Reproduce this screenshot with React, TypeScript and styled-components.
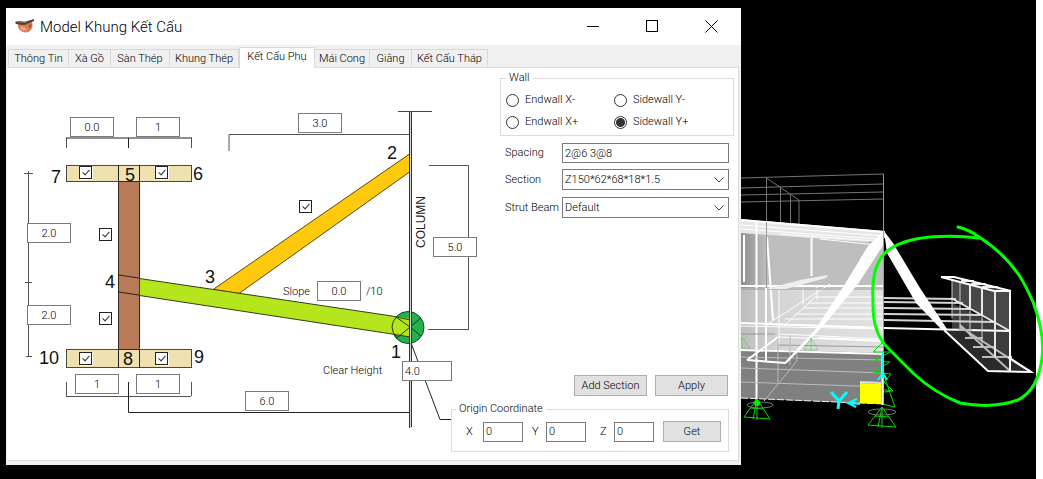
import React from "react";
import styled, { createGlobalStyle, css } from "styled-components";

const GlobalStyle = createGlobalStyle`
  *, *::before, *::after { box-sizing: border-box; }
  body { margin: 0; background: #000; }
  body, button, input, select, fieldset {
    font-family: Roboto, "Noto Sans", sans-serif;
    font-size: 11px;
    line-height: 14px;
    font-weight: 300;
    color: #000;
  }
`;

const Desktop = styled.main`
  display: flex;
  align-items: flex-start;
  min-height: 100vh;
  background: #000;
`;

const Window = styled.section`
  flex: 735 1 0;
  min-width: 735px;
  margin: 8px 0 0 6px;
  background: #f0f0f0;
`;

const TitleBar = styled.header`
  display: flex;
  align-items: center;
  height: 37px;
  padding-left: 9px;
  background: #fff;
`;

const Title = styled.h1`
  flex: 1;
  margin: 0 0 0 5px;
  font-size: 15px;
  line-height: 20px;
  font-weight: 300;
`;

const CaptionButton = styled.button`
  display: grid;
  place-items: center;
  width: 59px;
  height: 36px;
  padding: 0;
  border: 0;
  background: none;
`;

const TabStrip = styled.div`
  display: flex;
  align-items: flex-end;
  height: 22px;
  padding: 0 2px;
`;

const Tab = styled.button<{ $w: number; $selected?: boolean }>`
  width: ${(p) => p.$w}px;
  height: 18px;
  padding: 0;
  white-space: nowrap;
  border: 1px solid #d9d9d9;
  border-width: 1px 1px 0 0;
  background: #f0f0f0;
  &:first-child { border-left-width: 1px; }
  ${(p) =>
    p.$selected &&
    css`
      height: 21px;
      margin-bottom: -1px;
      padding-bottom: 3px;
      border-left-width: 1px;
      background: #fff;
      z-index: 1;
    `}
`;

const TabPage = styled.div`
  display: grid;
  grid-template-columns: 443px 49px 1fr;
  grid-template-rows: auto 50px;
  margin: 0 2px 0 1px;
  padding: 0 0 8px 1px;
  border: 1px solid #dcdcdc;
  border-left: 0;
  background: #fff;
`;

const WindowEdge = styled.div`
  height: 4px;
`;

const Canvas = styled.div`
  position: relative;
  grid-column: 1 / 3;
  grid-row: 1 / 3;
  width: 492px;
  height: 384px;
`;

const Drawing = styled.svg`
  display: block;
  text {
    font-family: "Liberation Sans", Arial, sans-serif;
    font-weight: 400;
  }
`;

const TextBox = styled.input`
  min-width: 0;
  height: 20px;
  padding: 0 2px;
  border: 1px solid #7a7a7a;
  border-radius: 0;
  background: #fff;
`;

const DimensionBox = styled(TextBox)<{ $x: number; $y: number; $wide?: boolean }>`
  position: absolute;
  left: ${(p) => p.$x}px;
  top: ${(p) => p.$y}px;
  width: ${(p) => (p.$wide ? 50 : 44)}px;
  text-align: ${(p) => (p.$wide ? "left" : "center")};
`;

const CanvasLabel = styled.label<{ $x: number; $y: number }>`
  position: absolute;
  left: ${(p) => p.$x}px;
  top: ${(p) => p.$y}px;
  white-space: nowrap;
`;

const MemberCheck = styled.input<{ $x: number; $y: number }>`
  appearance: none;
  position: absolute;
  left: ${(p) => p.$x}px;
  top: ${(p) => p.$y}px;
  width: 13px;
  height: 13px;
  margin: 0;
  border: 1px solid #222;
  background: #fff;
  box-shadow: 1px 1px 0 #fff;
  &:checked::after {
    content: "";
    position: absolute;
    left: 4px;
    top: 1px;
    width: 4px;
    height: 7px;
    border: solid #333;
    border-width: 0 1px 1px 0;
    transform: rotate(42deg);
  }
`;

const SidePanel = styled.div`
  grid-column: 3;
  grid-row: 1;
  display: flex;
  flex-direction: column;
  justify-content: space-between;
`;

const Settings = styled.div`
  padding: 3px 4px 0 0;
`;

const Group = styled.fieldset`
  min-width: 0;
  margin: 0;
  border: 1px solid #dcdcdc;
  legend {
    padding: 0 3px;
  }
`;

const WallGroup = styled(Group)`
  display: grid;
  grid-template-columns: 108px 1fr;
  align-content: start;
  row-gap: 8px;
  height: 65px;
  padding: 8px 5px 0;
`;

const RadioLabel = styled.label`
  display: flex;
  align-items: center;
  gap: 6px;
  height: 14px;
  white-space: nowrap;
`;

const Radio = styled.input`
  appearance: none;
  width: 13px;
  height: 13px;
  margin: 0;
  border: 1px solid #333;
  border-radius: 50%;
  background: #fff;
  &:checked {
    background: radial-gradient(circle, #333 4px, #fff 5px);
  }
`;

const FieldGrid = styled.div`
  display: grid;
  grid-template-columns: 57px 1fr;
  align-items: center;
  row-gap: 6px;
  padding: 7px 5px 0;
`;

const FieldLabel = styled.label`
  white-space: nowrap;
`;

const SelectBox = styled.div`
  display: grid;
  align-items: center;
  margin-bottom: 1px;
  > * { grid-area: 1 / 1; }
  svg { justify-self: end; margin-right: 5px; pointer-events: none; }
`;

const Select = styled.select`
  appearance: none;
  width: 100%;
  height: 21px;
  padding: 0 2px;
  border: 1px solid #7a7a7a;
  border-radius: 0;
  background: #fff;
`;

const Actions = styled.div`
  display: flex;
  justify-content: flex-end;
  gap: 8px;
  padding: 0 10px 6px 0;
`;

const PushButton = styled.button<{ $w: number }>`
  width: ${(p) => p.$w}px;
  height: 21px;
  padding: 0;
  border: 1px solid #adadad;
  background: #e1e1e1;
  white-space: nowrap;
`;

const OriginGroup = styled(Group)`
  grid-column: 2 / 4;
  grid-row: 2;
  position: relative;
  display: flex;
  align-items: center;
  height: 50px;
  margin-right: 9px;
  padding: 0 7px 4px 5px;
  legend { margin-left: -1px; }
`;

const AxisLabel = styled.label`
  display: flex;
  align-items: center;
  justify-content: space-between;
  width: 54px;
  margin-left: 9px;
  & + & { margin-left: 9px; }
  & + & + & { margin-left: 14px; }
  input { width: 40px; }
  &:first-of-type { width: 57px; }
`;

const Spacer = styled.span`
  flex: 1;
`;

const Viewport = styled.svg`
  display: block;
  flex: 302 1 0;
  min-width: 0;
  height: auto;
`;

const tabs = [
  { name: "Thông Tin", w: 61 },
  { name: "Xà Gồ", w: 42 },
  { name: "Sàn Thép", w: 59 },
  { name: "Khung Thép", w: 69 },
  { name: "Kết Cấu Phụ", w: 76 },
  { name: "Mái Cong", w: 55 },
  { name: "Giằng", w: 42 },
  { name: "Kết Cấu Tháp", w: 76 },
];

const dimensions = [
  { name: "Top left flange", x: 62, y: 49, v: "0.0" },
  { name: "Top right flange", x: 128, y: 49, v: "1" },
  { name: "Strut offset", x: 290, y: 45, v: "3.0" },
  { name: "Upper height", x: 19, y: 155, v: "2.0" },
  { name: "Lower height", x: 19, y: 237, v: "2.0" },
  { name: "Strut height", x: 425, y: 169, v: "5.0" },
  { name: "Bottom left flange", x: 67, y: 306, v: "1" },
  { name: "Bottom right flange", x: 128, y: 306, v: "1" },
  { name: "Beam length", x: 237, y: 323, v: "6.0" },
];

const members = [
  { name: "Member 5-7", x: 71, y: 98 },
  { name: "Member 5-6", x: 147, y: 98 },
  { name: "Member 4-5", x: 91, y: 160 },
  { name: "Member 2-3", x: 291, y: 132 },
  { name: "Member 4-8", x: 91, y: 244 },
  { name: "Member 8-10", x: 71, y: 284 },
  { name: "Member 8-9", x: 147, y: 284 },
];

const nodes = [
  { n: "7", x: 51, y: 183 },
  { n: "5", x: 125, y: 181 },
  { n: "6", x: 193, y: 180 },
  { n: "2", x: 387, y: 159 },
  { n: "4", x: 105, y: 288 },
  { n: "3", x: 205, y: 283 },
  { n: "10", x: 39, y: 364 },
  { n: "8", x: 123, y: 365 },
  { n: "9", x: 194, y: 363 },
  { n: "1", x: 391, y: 358 },
];

function AppIcon() {
  return (
    <svg width="20" height="15" viewBox="0 0 20 15" aria-hidden="true">
      <path d="M3 4 L17 3 Q19 8 15 12 Q11 15 6 12 Q2 9 3 4Z" fill="#d98258" />
      <path d="M5 8 Q9 7 12 10 Q10 13 7 11Z" fill="#f1a97c" />
      <path d="M13 6 L17 5 L15 10Z" fill="#b45634" />
      <path d="M0 3 Q5 1 9 3 L19 0 L19 2 L10 6 Q5 6 1 5Z" fill="#5b3a32" />
      <path d="M3 3 L12 3" stroke="#a58b7e" />
    </svg>
  );
}

function Chevron() {
  return (
    <svg width="10" height="6" viewBox="0 0 10 6" fill="none" stroke="#444" aria-hidden="true">
      <path d="M0.5 0.5 L5 5 L9.5 0.5" />
    </svg>
  );
}

function FrameDrawing() {
  return (
    <Drawing width="492" height="384" viewBox="8 68 492 384">
      <g fill="#efe2b0" stroke="#4c4a40">
        <rect x="66.5" y="165.5" width="125" height="16" />
        <rect x="66.5" y="349.5" width="125" height="18" />
      </g>
      <rect x="118.5" y="181.5" width="21" height="168" fill="#b97a57" stroke="#33261f" />
      <path d="M118.5 165V182M139.5 165V182M118.5 349V368M139.5 349V368" stroke="#222" />
      <path d="M118.5 275 L139 278M118.5 292 L139 295" stroke="#222" />
      <path d="M213 289.500 L409.500 154 V172 L239 293.500Z" fill="#ffc90e" stroke="#5c4a12" />
      <circle cx="408" cy="327.500" r="16" fill="#22b14c" stroke="#164a25" />
      <path d="M139.500 278.500 L410 318.700 V337 L139.500 295.500Z" fill="#b5e61d" />
      <path d="M410 320 L392 316 L139.500 278.500 V295.500 L392 334 L410 337" fill="none" stroke="#363d16" />
      <path d="M397 316 Q387 327 397 338M410 327 L396 317M410 327 L397 338M410 327 L421 318M410 327 L421 336" fill="none" stroke="#183b16" />
      <path d="M410.500 111V428" stroke="#d8d8d8" />
      <path d="M409.500 111V428M411.500 111V427" stroke="#333" />
      <path d="M398 111.500H432" stroke="#444" />
      <g fill="none" stroke="#555">
        <path d="M66.500 148V138M191.500 148V138" />
        <path d="M229 151V134.500H409M429 165.500H468.500V329M428 329.500H469" />
        <path d="M28.500 171V357M24 173.500H33M25 282.500H32M26 356.500H32" />
        <path d="M66.500 382V396M191.500 382V396" />
        <path d="M66 396.500H191" strokeWidth="1" />
      </g>
      <path d="M66 138H192M128.500 138V148M128.500 382V412.500H409M411 343 L440 419.500H452" fill="none" stroke="#222" />
      <g fontSize="18" fill="#111">
        {nodes.map((p) => (
          <text key={p.n} x={p.x} y={p.y}>{p.n}</text>
        ))}
      </g>
      <text transform="translate(425 248) rotate(-90)" fontSize="12" fill="#222">COLUMN</text>
    </Drawing>
  );
}

function Support({ x, y, w = 13 }: { x: number; y: number; w?: number }) {
  return (
    <g transform={`translate(${x} ${y})`} fill="none" stroke="#0d0">
      <path d={`M0 0 L${-w} 18 L${w} 20Z M0 0V21 M0 0 L-4 20 M${-w / 2} 9 L${w / 2} 10`} />
    </g>
  );
}

function ModelView() {
  return (
    <Viewport width="302" height="479" viewBox="741 0 302 479" preserveAspectRatio="xMinYMin meet">
      <defs>
        <linearGradient id="wallShade">
          <stop offset="0" stopColor="#8e8e8e" />
          <stop offset="0.18" stopColor="#bebebe" />
          <stop offset="1" stopColor="#bebebe" />
        </linearGradient>
        <linearGradient id="floorShade">
          <stop offset="0" stopColor="#bdbdbd" />
          <stop offset="0.3" stopColor="#d6d6d6" />
          <stop offset="1" stopColor="#e2e2e2" />
        </linearGradient>
      </defs>
      <rect x="741" y="0" width="295" height="479" fill="#000" />
      <rect x="1036" y="0" width="7" height="479" fill="#fff" />

      <g fill="none" stroke="#737373">
        <path d="M741 178 L883.500 174V232M741 188 L883 184M741 195 L883 192M741 202 L883 199" />
        <path d="M766.500 178V290M766.500 178 L799 200V235M780.500 187V228M790.500 194V232" />
      </g>

      <path d="M741 220 L884 232V404L741 398Z" fill="url(#wallShade)" />
      <path d="M741 288H884V353L741 350Z" fill="url(#floorShade)" />
      <path d="M741 349 L884 353V404L741 398Z" fill="#808080" />
      <path d="M741 219 L885 231V238L866 242L741 233Z" fill="#e6e6e6" />
      <g fill="none" stroke="#fff">
        <path d="M741 220 L884 232" strokeWidth="2" />
        <path d="M741 225 L884 236M741 229 L880 239M820 239 L876 245M780 234 L876 241" />
        <path d="M811.500 238V276M756.500 222V400" strokeWidth="2" />
        <path d="M744 235V282M767 237 L773 320" strokeWidth="2" />
        <path d="M815 297H884M808 303H884M803 308H884M795 314H884M785 319H884M741 326L884 329M780 334L884 339" />
        <path d="M741 286H884M741 323 L884 328M818 338L884 341M741 350 L884 354" strokeWidth="2" />
        <path d="M766 325 L830 284M778 337 L830 339M784 326 L815 297M779 288V345M803 288V304M817 286V300" />
      </g>
      <g fill="none" stroke="#999">
        <path d="M741 289H884M766.500 222V290M778 345L884 347M775 334H741" />
        <path d="M741 357L884 360M741 368L884 373M741 382L884 387M764 401L797 361V349M778 337V382M790 336V365" stroke="#bbb" />
      </g>
      <path d="M741 398 L884 404" stroke="#eee" strokeDasharray="7 2" />
      <path d="M766 289 L800 280 L828 275 L826 278 L786 289Z" fill="#eee" />
      <path d="M766 288V361M747 360 L786 363M747 360L778 337" fill="none" stroke="#fff" strokeWidth="2" />
      <path d="M884 231 L868 246 L845 284 L815 330 L784 363 H787 L824 325 L858 284 L884 244Z" fill="#fff" />
      <path d="M883.500 174V392" stroke="#999" />

      <path d="M952 280 L1010 291V331 L952 299Z" fill="#484848" />
      <path d="M952 303 L1010 331 V371 L952 330Z" fill="#555" fillOpacity="0.7" />
      <path d="M944 330 L965 329 L1031 372 L988 371Z" fill="#2a2a2a" />
      <g fill="none" stroke="#d4d4d4" strokeWidth="2">
        <path d="M884 298L956 299M884 302L963 303M884 308L970 309M884 314L982 315M884 320L995 322" />
        <path d="M884 328L1010 331" stroke="#fff" />
      </g>
      <path d="M960 327L1031 372M960 325L1010 371M958 330H972M965 338H983M973 347H996M982 357H1012" fill="none" stroke="#bbb" strokeWidth="2" />
      <path d="M960 283V330M970 285V337M982 288V347M995 290V357M952 280V318" fill="none" stroke="#ccc" />
      <path d="M970 285V310M982 288V315M995 290V357M951 298L1010 331M961 281L974 281M971 284L986 284M982 287L998 287" fill="none" stroke="#e8e8e8" strokeWidth="2" />
      <path d="M941 277 L954 277 L1011 291 L994 291 L941 277M1010 291V371M944 330 L988 371 L1031 372 L1008 357" fill="none" stroke="#fff" strokeWidth="2" />
      <path d="M884 231 L893 243 L920 288 L947 329 H941 L916 303 L887 253Z" fill="#fff" />

      <g fill="none" stroke="#0d0">
        <path d="M883 342 L873 352H890L874 361L890 362L873 372L891 374L884 382L893 391L879 389M883 373L895 407L882 404M884 392L892 391" />
      </g>
      <g opacity="0.55">
        <path d="M811 338 L804 350H818Z M811 338V350M742 337 L750 348H741M742 337V348" fill="none" stroke="#4c4" />
      </g>
      <Support x={757} y={399} />
      <Support x={882} y={407} w={14} />
      <g fill="none" stroke="#777">
        <ellipse cx="760" cy="405" rx="13" ry="3" />
        <ellipse cx="882" cy="412" rx="14" ry="3" />
      </g>
      <circle cx="757" cy="403" r="3" fill="#0e0" />
      <path d="M860 383 L881 384V404L860 403Z" fill="#ff0" />
      <path d="M860 382 L881 383" stroke="#ddd" strokeWidth="2" />
      <path d="M882.500 354V405" stroke="#fff" strokeWidth="2" />
      <g fill="none" stroke="#0ff" strokeWidth="2">
        <path d="M883 352V378M878 380 L883 373L887 380M860 404L848 403M857 399L848 403L856 407" />
        <path d="M831 392 L839 401L847 392M839 401L838 409" strokeWidth="3" />
      </g>
      <path
        d="M958 227 Q970 230 979 237 Q1003 252 1019 275 Q1026 286 1033 302 Q1045 334 1042 358 Q1038 390 1018 400 Q993 409 960 403 Q935 393 914 374 L886 346 Q872 331 873 300 Q871 266 886 252 Q900 240 930 237 Q955 235 979 238"
        fill="none"
        stroke="#0f0"
        strokeWidth="3"
        strokeLinecap="round"
        strokeLinejoin="round"
      />
    </Viewport>
  );
}

export default function App() {
  return (
    <Desktop>
      <GlobalStyle />
      <Window>
        <TitleBar>
          <AppIcon />
          <Title>Model Khung Kết Cấu</Title>
          <CaptionButton aria-label="Minimize">
            <svg width="13" height="13" stroke="#000"><path d="M0 6.500H12" /></svg>
          </CaptionButton>
          <CaptionButton aria-label="Maximize">
            <svg width="13" height="13" stroke="#000" fill="none"><rect x="0.500" y="0.500" width="11" height="11" /></svg>
          </CaptionButton>
          <CaptionButton aria-label="Close">
            <svg width="13" height="13" stroke="#000"><path d="M0.500 0.500L12.500 12.500M12.500 0.500L0.500 12.500" /></svg>
          </CaptionButton>
        </TitleBar>
        <TabStrip role="tablist">
          {tabs.map((t) => (
            <Tab key={t.name} role="tab" $w={t.w} $selected={t.name === "Kết Cấu Phụ"} aria-selected={t.name === "Kết Cấu Phụ"}>
              {t.name}
            </Tab>
          ))}
        </TabStrip>
        <TabPage role="tabpanel">
          <Canvas>
            <FrameDrawing />
            {members.map((m) => (
              <MemberCheck key={m.name} type="checkbox" aria-label={m.name} defaultChecked $x={m.x} $y={m.y} />
            ))}
            {dimensions.map((d) => (
              <DimensionBox key={d.name} aria-label={d.name} defaultValue={d.v} $x={d.x} $y={d.y} />
            ))}
            <CanvasLabel htmlFor="slope" $x={275} $y={217}>Slope</CanvasLabel>
            <DimensionBox id="slope" defaultValue="0.0" $x={309} $y={213} />
            <CanvasLabel htmlFor="slope" $x={358} $y={217}>/10</CanvasLabel>
            <CanvasLabel htmlFor="clear" $x={315} $y={296}>Clear Height</CanvasLabel>
            <DimensionBox id="clear" defaultValue="4.0" $x={394} $y={293} $wide />
          </Canvas>
          <SidePanel>
            <Settings>
              <WallGroup>
                <legend>Wall</legend>
                <RadioLabel><Radio type="radio" name="wall" />Endwall X-</RadioLabel>
                <RadioLabel><Radio type="radio" name="wall" />Sidewall Y-</RadioLabel>
                <RadioLabel><Radio type="radio" name="wall" />Endwall X+</RadioLabel>
                <RadioLabel><Radio type="radio" name="wall" defaultChecked />Sidewall Y+</RadioLabel>
              </WallGroup>
              <FieldGrid>
                <FieldLabel htmlFor="spacing">Spacing</FieldLabel>
                <TextBox id="spacing" defaultValue="2@6 3@8" />
                <FieldLabel htmlFor="section">Section</FieldLabel>
                <SelectBox>
                  <Select id="section"><option>Z150*62*68*18*1.5</option></Select>
                  <Chevron />
                </SelectBox>
                <FieldLabel htmlFor="strut">Strut Beam</FieldLabel>
                <SelectBox>
                  <Select id="strut"><option>Default</option></Select>
                  <Chevron />
                </SelectBox>
              </FieldGrid>
            </Settings>
            <Actions>
              <PushButton $w={73}>Add Section</PushButton>
              <PushButton $w={73}>Apply</PushButton>
            </Actions>
          </SidePanel>
          <OriginGroup>
            <legend>Origin Coordinate</legend>
            <AxisLabel>X<TextBox defaultValue="0" /></AxisLabel>
            <AxisLabel>Y<TextBox defaultValue="0" /></AxisLabel>
            <AxisLabel>Z<TextBox defaultValue="0" /></AxisLabel>
            <Spacer />
            <PushButton $w={58}>Get</PushButton>
          </OriginGroup>
        </TabPage>
        <WindowEdge />
      </Window>
      <ModelView />
    </Desktop>
  );
}
